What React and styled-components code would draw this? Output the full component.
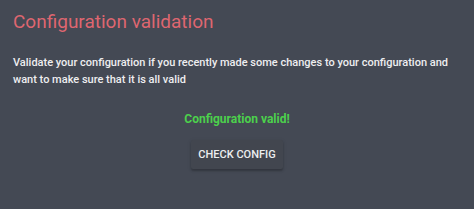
import React from 'react';
import styled, { createGlobalStyle } from 'styled-components';

const GlobalStyle = createGlobalStyle`
    html, body {
        margin: 0;
        padding: 0;
        background: #444954;
    }
    body {
        font-family: Roboto, "Liberation Sans", sans-serif;
    }
`;

const Card = styled.div`
    width: 474px;
    height: 209px;
    box-sizing: border-box;
    padding: 9px 13px 0;
    background: #444954;
`;

const Title = styled.h2`
    margin: 0;
    font-size: 19px;
    font-weight: 400;
    line-height: 26px;
    color: #de6670;
`;

const Description = styled.p`
    margin: 19px 0 0;
    font-size: 11px;
    font-weight: 500;
    line-height: 17px;
    color: #eeeef0;
`;

const Status = styled.div`
    margin-top: 24px;
    text-align: center;
    font-size: 12px;
    line-height: 14px;
    font-weight: 700;
    color: ${(p) => (p.valid ? '#4cd04c' : '#e05c5c')};
`;

const Actions = styled.div`
    display: flex;
    justify-content: center;
    margin-top: 14px;
`;

const Button = styled.button`
    height: 29px;
    padding: 0 7px;
    border: none;
    border-radius: 2px;
    background: #42464f;
    color: #eceef0;
    font-family: Roboto, "Liberation Sans", sans-serif;
    font-size: 11px;
    font-weight: 500;
    text-transform: uppercase;
    box-shadow: 0 2px 2px rgba(0, 0, 0, 0.2), 0 1px 4px rgba(0, 0, 0, 0.12);
    cursor: pointer;
`;

const App = () => {
    return (
        <>
            <GlobalStyle />
            <Card>
                <Title>Configuration validation</Title>
                <Description>
                    Validate your configuration if you recently made some changes to your configuration and
                    want to make sure that it is all valid
                </Description>
                <Status valid>Configuration valid!</Status>
                <Actions>
                    <Button>Check config</Button>
                </Actions>
            </Card>
        </>
    );
};

export default App;
